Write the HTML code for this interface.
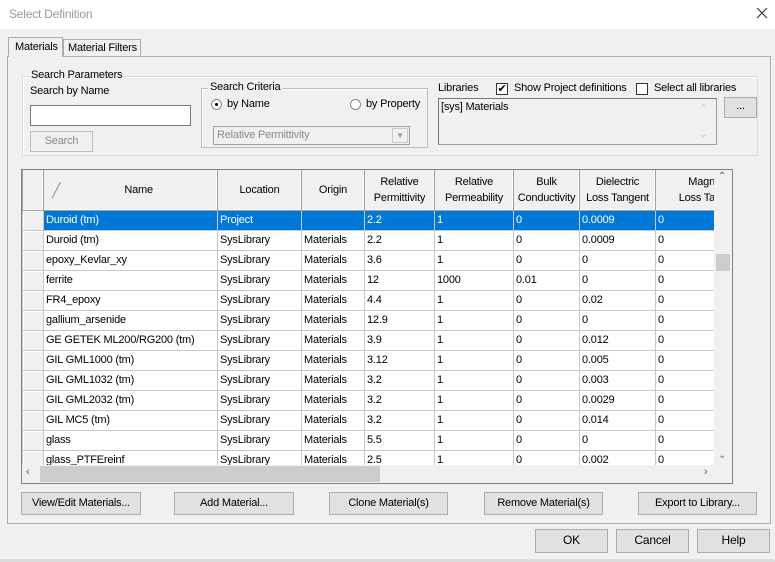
<!DOCTYPE html>
<html><head><meta charset="utf-8"><style>
*{box-sizing:border-box;margin:0;padding:0}
body{width:775px;height:562px;background:#f0f0f0;font-family:"Liberation Sans",sans-serif;font-size:11px;color:#000;position:relative;overflow:hidden;white-space:nowrap;letter-spacing:-0.2px}
.a{position:absolute}
.btn{position:absolute;background:#e1e1e1;border:1px solid #adadad;text-align:center;line-height:21px;font-size:11px}
.grp{position:absolute;border:1px solid #dcdcdc;box-shadow:inset 1px 1px 0 #fff}
.lg{position:absolute;top:-8px;left:6px;background:#f0f0f0;padding:0 2px;font-size:11px}
table{border-collapse:collapse;table-layout:fixed;font-size:11px}
td{height:20px;border:1px solid #c8c8c8;padding:0 2px;white-space:nowrap;overflow:hidden;background:#fff}
td.h{background:#f0f0f0;border:1px solid #c8c8c8;box-shadow:inset 1px 1px 0 #fff}
tr.sel td{background:#0078d7;color:#fff}
tr.sel td.h{background:#f0f0f0}
th{height:40px;background:#f0f0f0;border:1px solid #a0a0a0;border-top:0;font-weight:normal;text-align:center;line-height:16px;font-size:11px;overflow:hidden;white-space:nowrap;box-shadow:inset -1px -1px 0 #fff}
</style></head><body>
<div class="a" style="left:0;top:0;width:775px;height:29px;background:#fff"></div>
<div class="a" style="left:9px;top:7px;font-size:12px;color:#999">Select Definition</div>
<svg class="a" style="left:756px;top:7px" width="12" height="12"><path d="M1 1L11 11M11 1L1 11" stroke="#333" stroke-width="1.1"/></svg>

<div class="a" style="left:7px;top:56px;width:764px;height:468px;border:1px solid #adadad;background:#f0f0f0"></div>
<div class="a" style="left:8px;top:37px;width:55px;height:20px;border:1px solid #adadad;border-bottom:0;background:#f0f0f0;padding:3px 0 0 6px">Materials</div>
<div class="a" style="left:63px;top:39px;width:78px;height:17px;border:1px solid #adadad;border-bottom:0;background:#f0f0f0;padding:2px 0 0 4px">Material Filters</div>

<div class="grp" style="left:22px;top:76px;width:736px;height:80px"><span class="lg">Search Parameters</span></div>
<div class="a" style="left:30px;top:85px">Search by Name</div>
<div class="a" style="left:30px;top:105px;width:161px;height:21px;background:#fff;border:1px solid #7a7a7a"></div>
<div class="btn" style="left:30px;top:131px;width:63px;height:21px;line-height:19px;color:#8a8a8a;background:#f0f0f0;border-color:#bfbfbf">Search</div>
<div class="grp" style="left:201px;top:88px;width:227px;height:60px;border-color:#bcbcbc"><span class="lg">Search Criteria</span></div>
<div class="a" style="left:211px;top:99px;width:11px;height:11px;border-radius:50%;border:1px solid #888;background:#fff"><div class="a" style="left:3px;top:3px;width:3px;height:3px;border-radius:50%;background:#000"></div></div>
<div class="a" style="left:227px;top:98px">by Name</div>
<div class="a" style="left:350px;top:99px;width:11px;height:11px;border-radius:50%;border:1px solid #888;background:#fff"></div>
<div class="a" style="left:366px;top:98px">by Property</div>
<div class="a" style="left:213px;top:126px;width:197px;height:19px;border:1px solid #a0a0a0;background:#f0f0f0;color:#8a8a8a;padding:2px 3px">Relative Permittivity<div class="a" style="right:1px;top:1px;width:16px;height:15px;border:1px solid #ccc;text-align:center;font-size:8px;line-height:14px;color:#999">▼</div></div>

<div class="a" style="left:438px;top:82px">Libraries</div>
<div class="a" style="left:496px;top:83px;width:12px;height:12px;border:1px solid #333;background:#fff;font-size:11px;line-height:10px;text-align:center">✔</div>
<div class="a" style="left:514px;top:82px">Show Project definitions</div>
<div class="a" style="left:636px;top:83px;width:12px;height:12px;border:1px solid #333;background:#fff"></div>
<div class="a" style="left:654px;top:82px">Select all libraries</div>
<div class="a" style="left:438px;top:98px;width:279px;height:47px;border:1px solid #a0a0a0;border-top-color:#777;border-left-color:#777;background:#f0f0f0;padding:2px 2px">[sys] Materials</div>
<div class="a" style="left:700px;top:103px;color:#bbb;font-size:9px">⌃</div>
<div class="a" style="left:700px;top:129px;color:#bbb;font-size:9px">⌄</div>
<div class="btn" style="left:724px;top:97px;width:33px;height:21px;line-height:17px">...</div>

<div class="a" style="left:21px;top:169px;width:712px;height:315px;border:1px solid #828282;background:#fff;overflow:hidden">
<table style="width:693px">
<colgroup><col style="width:21px"><col style="width:174px"><col style="width:84px"><col style="width:63px"><col style="width:70px"><col style="width:79px"><col style="width:66px"><col style="width:76px"><col style="width:60px"></colgroup>
<tr><th></th><th><span style="float:left;margin-left:8px;color:#999;font-size:14px">╱</span>Name</th><th>Location</th><th>Origin</th><th>Relative<br>Permittivity</th><th>Relative<br>Permeability</th><th>Bulk<br>Conductivity</th><th>Dielectric<br>Loss Tangent</th><th style="text-align:right">Magn<br>Loss Ta</th></tr>
<tr class="sel"><td class="h"></td><td>Duroid (tm)</td><td>Project</td><td></td><td>2.2</td><td>1</td><td>0</td><td>0.0009</td><td>0</td></tr>
<tr><td class="h"></td><td>Duroid (tm)</td><td>SysLibrary</td><td>Materials</td><td>2.2</td><td>1</td><td>0</td><td>0.0009</td><td>0</td></tr>
<tr><td class="h"></td><td>epoxy_Kevlar_xy</td><td>SysLibrary</td><td>Materials</td><td>3.6</td><td>1</td><td>0</td><td>0</td><td>0</td></tr>
<tr><td class="h"></td><td>ferrite</td><td>SysLibrary</td><td>Materials</td><td>12</td><td>1000</td><td>0.01</td><td>0</td><td>0</td></tr>
<tr><td class="h"></td><td>FR4_epoxy</td><td>SysLibrary</td><td>Materials</td><td>4.4</td><td>1</td><td>0</td><td>0.02</td><td>0</td></tr>
<tr><td class="h"></td><td>gallium_arsenide</td><td>SysLibrary</td><td>Materials</td><td>12.9</td><td>1</td><td>0</td><td>0</td><td>0</td></tr>
<tr><td class="h"></td><td>GE GETEK ML200/RG200 (tm)</td><td>SysLibrary</td><td>Materials</td><td>3.9</td><td>1</td><td>0</td><td>0.012</td><td>0</td></tr>
<tr><td class="h"></td><td>GIL GML1000 (tm)</td><td>SysLibrary</td><td>Materials</td><td>3.12</td><td>1</td><td>0</td><td>0.005</td><td>0</td></tr>
<tr><td class="h"></td><td>GIL GML1032 (tm)</td><td>SysLibrary</td><td>Materials</td><td>3.2</td><td>1</td><td>0</td><td>0.003</td><td>0</td></tr>
<tr><td class="h"></td><td>GIL GML2032 (tm)</td><td>SysLibrary</td><td>Materials</td><td>3.2</td><td>1</td><td>0</td><td>0.0029</td><td>0</td></tr>
<tr><td class="h"></td><td>GIL MC5 (tm)</td><td>SysLibrary</td><td>Materials</td><td>3.2</td><td>1</td><td>0</td><td>0.014</td><td>0</td></tr>
<tr><td class="h"></td><td>glass</td><td>SysLibrary</td><td>Materials</td><td>5.5</td><td>1</td><td>0</td><td>0</td><td>0</td></tr>
<tr><td class="h"></td><td>glass_PTFEreinf</td><td>SysLibrary</td><td>Materials</td><td>2.5</td><td>1</td><td>0</td><td>0.002</td><td>0</td></tr>
</table>
<div class="a" style="left:692px;top:0;width:18px;height:295px;background:#f0f0f0"></div>
<div class="a" style="left:694px;top:84px;width:14px;height:17px;background:#cdcdcd"></div>
<div class="a" style="left:696px;top:1px;color:#555;font-size:10px">⌃</div>
<div class="a" style="left:696px;top:280px;color:#777;font-size:10px">⌄</div>
<div class="a" style="left:0;top:295px;width:710px;height:18px;background:#f0f0f0"></div>
<div class="a" style="left:18px;top:296px;width:340px;height:16px;background:#cdcdcd"></div>
<div class="a" style="left:4px;top:296px;color:#555;font-size:11px">‹</div>
<div class="a" style="left:682px;top:296px;color:#555;font-size:11px">›</div>
</div>

<div class="btn" style="left:21px;top:492px;width:120px;height:23px">View/Edit Materials...</div>
<div class="btn" style="left:174px;top:492px;width:120px;height:23px">Add Material...</div>
<div class="btn" style="left:329px;top:492px;width:119px;height:23px">Clone Material(s)</div>
<div class="btn" style="left:484px;top:492px;width:119px;height:23px">Remove Material(s)</div>
<div class="btn" style="left:638px;top:492px;width:119px;height:23px">Export to Library...</div>

<div class="btn" style="left:535px;top:529px;width:73px;height:24px;font-size:12px">OK</div>
<div class="btn" style="left:616px;top:529px;width:73px;height:24px;font-size:12px">Cancel</div>
<div class="btn" style="left:697px;top:529px;width:73px;height:24px;font-size:12px">Help</div>
<div class="a" style="left:0;top:559px;width:775px;height:3px;background:#dcdcdc"></div>
</body></html>
